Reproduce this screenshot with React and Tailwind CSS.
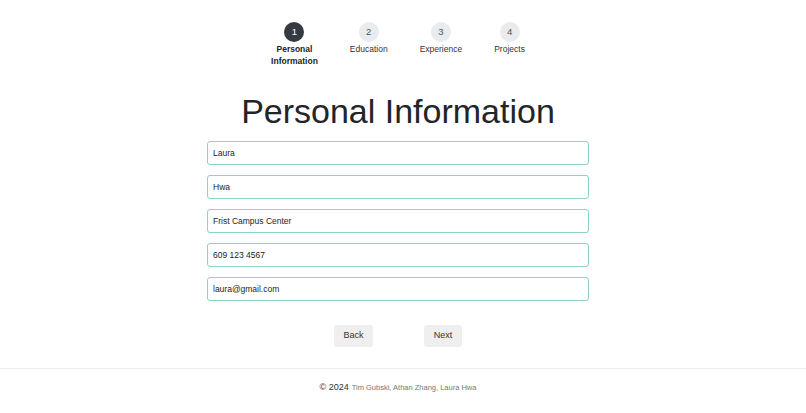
import React from "react";

const steps = [
  { n: 1, label: "Personal Information", active: true },
  { n: 2, label: "Education" },
  { n: 3, label: "Experience" },
  { n: 4, label: "Projects" },
];

const fields = ["Laura", "Hwa", "Frist Campus Center", "609 123 4567", "laura@gmail.com"];

const App = () => {
  return (
    <div className="min-h-[413px] w-full bg-white flex flex-col pr-[10px] font-['Liberation_Sans',Arial,sans-serif] text-[#212529]">
      {/* stepper */}
      <div className="flex justify-center items-start gap-8 pt-[22px]">
        {steps.map((s) => (
          <div key={s.n} className="flex flex-col items-center">
            <div
              className={
                s.active
                  ? "w-5 h-5 rounded-full bg-[#343a40] text-white text-[9.5px] flex items-center justify-center"
                  : "w-5 h-5 rounded-full bg-[#e9ecef] text-[#555] text-[9.5px] flex items-center justify-center"
              }
            >
              {s.n}
            </div>
            <div
              className={
                s.active
                  ? "w-min text-center text-[8.5px] leading-[12px] font-bold text-[#212529] mt-[1px]"
                  : "text-center text-[8.5px] leading-[12px] text-[#333] mt-[1px]"
              }
            >
              {s.label}
            </div>
          </div>
        ))}
      </div>

      <h1 className="text-center text-[34px] leading-[40px] text-[#212529] mt-[24px] mb-[10px]">
        Personal Information
      </h1>

      <div className="flex flex-col items-center gap-[10px]">
        {fields.map((f) => (
          <input
            key={f}
            defaultValue={f}
            className="w-[382px] h-[24px] border border-[#8cd3c9] rounded-[3px] px-[5px] text-[8.5px] text-[#212529] outline-none"
          />
        ))}
      </div>

      <div className="flex justify-center gap-[51px] mt-[24px]">
        <button className="w-[39px] h-[22px] bg-[#efefef] rounded-[3px] text-[9px] text-[#333]">Back</button>
        <button className="w-[38px] h-[22px] bg-[#efefef] rounded-[3px] text-[9px] text-[#333]">Next</button>
      </div>

      <footer className="mt-[21px] -mr-[10px] pr-[10px] border-t border-[#ececec] flex justify-center items-center h-[38px]">
        <span className="text-[9px] text-[#333]">© 2024</span>
        <span className="text-[7.5px] text-[#777] ml-[3px]">Tim Gubski, Athan Zhang, Laura Hwa</span>
      </footer>
    </div>
  );
};

export default App;
